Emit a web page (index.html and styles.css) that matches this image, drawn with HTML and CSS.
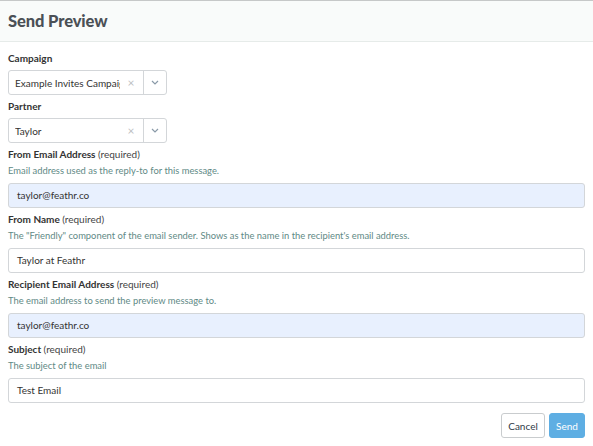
FILE: index.html
```html
<!DOCTYPE html>
<html>
<head>
<meta charset="utf-8">
<link rel="stylesheet" href="styles.css">
</head>
<body>
<div class="modal">
  <div class="header"><h1 class="title">Send Preview</h1></div>
  <div class="content">
    <div class="field">
      <label class="label">Campaign</label>
      <div class="select">
        <span class="select-value">Example Invites Campaign</span>
        <span class="select-clear">×</span>
        <span class="select-arrow"><svg width="8" height="5" viewBox="0 0 8 5"><path d="M1 1l3 3 3-3" fill="none" stroke="#8a9aa8" stroke-width="1.2"/></svg></span>
      </div>
    </div>
    <div class="field">
      <label class="label">Partner</label>
      <div class="select">
        <span class="select-value">Taylor</span>
        <span class="select-clear">×</span>
        <span class="select-arrow"><svg width="8" height="5" viewBox="0 0 8 5"><path d="M1 1l3 3 3-3" fill="none" stroke="#8a9aa8" stroke-width="1.2"/></svg></span>
      </div>
    </div>
    <div class="field">
      <label class="label label-help">From Email Address <span class="req">(required)</span></label>
      <div class="help">Email address used as the reply-to for this message.</div>
      <div class="input autofill">taylor@feathr.co</div>
    </div>
    <div class="field">
      <label class="label label-help">From Name <span class="req">(required)</span></label>
      <div class="help">The "Friendly" component of the email sender. Shows as the name in the recipient's email address.</div>
      <div class="input">Taylor at Feathr</div>
    </div>
    <div class="field">
      <label class="label label-help">Recipient Email Address <span class="req">(required)</span></label>
      <div class="help">The email address to send the preview message to.</div>
      <div class="input autofill">taylor@feathr.co</div>
    </div>
    <div class="field">
      <label class="label label-help">Subject <span class="req">(required)</span></label>
      <div class="help">The subject of the email</div>
      <div class="input">Test Email</div>
    </div>
    <div class="actions">
      <button class="btn btn-cancel">Cancel</button>
      <button class="btn btn-send">Send</button>
    </div>
  </div>
</div>
</body>
</html>
```
FILE: styles.css
```css
html, body {
  margin: 0;
  padding: 0;
  background: #ffffff;
  font-family: Lato, "Noto Sans", sans-serif;
  color: #333333;
}
.modal {
  width: 593px;
}
.header {
  border-top: 1px solid #c6c8c8;
  border-bottom: 1px solid #e6ebe9;
  background: #f9fbfa;
  height: 40px;
  padding: 0 8px;
}
.title {
  margin: 0;
  font-size: 16.5px;
  font-weight: 900;
  line-height: 40px;
  color: #4b5056;
  letter-spacing: -0.1px;
}
.content {
  padding: 9px 8px 0 8px;
}
.field {
  display: flex;
  flex-direction: column;
  margin-bottom: 4px;
}
.label {
  font-size: 10px;
  font-weight: 700;
  line-height: 14px;
  color: #333333;
  margin-bottom: 5px;
}
.label-help {
  margin-bottom: 3px;
}
.req {
  font-weight: 400;
  color: #444444;
}
.help {
  font-size: 9.4px;
  line-height: 14px;
  color: #5f8a86;
  margin-bottom: 5px;
  white-space: nowrap;
}
.select {
  width: 159px;
  height: 25px;
  box-sizing: border-box;
  border: 1px solid #d3d6d9;
  border-radius: 3px;
  display: flex;
  align-items: center;
  font-size: 10px;
  color: #333333;
  background: #ffffff;
}
.select-value {
  flex: 1;
  min-width: 0;
  margin-left: 6px;
  margin-right: 6px;
  white-space: nowrap;
  overflow: hidden;
}
.select-clear {
  width: 10px;
  text-align: center;
  color: #bdc0c3;
  font-size: 12px;
  margin-right: 7px;
}
.select-arrow {
  width: 22px;
  height: 100%;
  border-left: 1px solid #d3d6d9;
  display: flex;
  align-items: center;
  justify-content: center;
}
.input {
  height: 25px;
  box-sizing: border-box;
  border: 1px solid #d3d6d9;
  border-radius: 3px;
  padding: 0 8px;
  font-size: 10px;
  line-height: 23px;
  color: #333333;
  background: #ffffff;
}
.autofill {
  background: #e8f0fe;
}
.actions {
  display: flex;
  justify-content: flex-end;
  gap: 4px;
  margin-top: 10px;
}
.btn {
  height: 25px;
  box-sizing: border-box;
  border-radius: 3px;
  font-family: Lato, "Noto Sans", sans-serif;
  font-size: 10px;
  padding: 0;
  cursor: pointer;
}
.btn-cancel {
  width: 44px;
  border: 1px solid #c9ccce;
  background: #ffffff;
  color: #2f3b47;
}
.btn-send {
  width: 36px;
  border: 1px solid #5eaee3;
  background: #5eaee3;
  color: #ffffff;
}
```
